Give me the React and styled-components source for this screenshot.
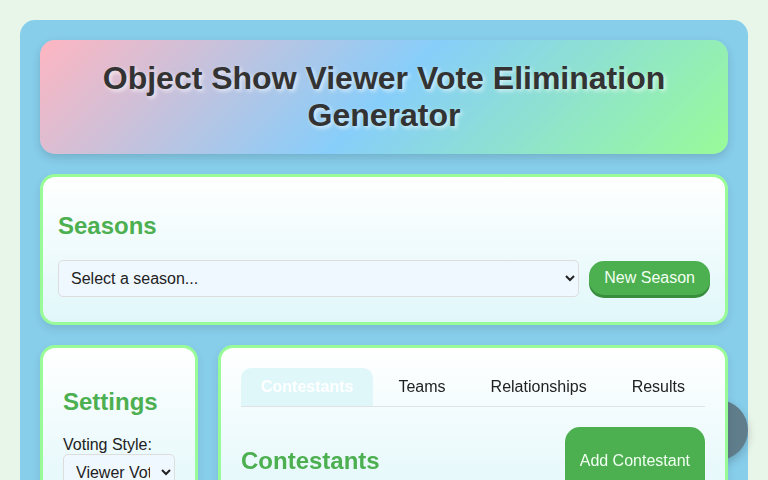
import { useState } from "react";
import styled, { createGlobalStyle } from "styled-components";

const GlobalStyle = createGlobalStyle`
  body {
    margin: 0;
    background: #e8f5e9;
    font-family: "Liberation Sans", Arial, sans-serif;
    color: #333;
  }
`;

const Container = styled.div`
  margin: 20px;
  padding: 20px;
  background: #87ceeb;
  border-radius: 15px;
`;

const Header = styled.header`
  padding: 20px;
  border-radius: 15px;
  background: linear-gradient(135deg, #ffb6c1, #87cefa, #98fb98);
  box-shadow: 0 4px 10px rgba(0, 0, 0, 0.15);
  text-align: center;
  h1 {
    margin: 0;
    font-size: 32px;
    color: #333;
    text-shadow: 2px 2px 4px rgba(255, 255, 255, 0.7);
  }
`;

const Card = styled.section`
  position: relative;
  margin-top: 20px;
  padding: ${(props) => (props.$tight ? "15px" : "20px")};
  border: 3px solid #98fb98;
  border-radius: 15px;
  background: linear-gradient(to bottom, #ffffff, #e0f7fa);
  box-shadow: 0 4px 8px rgba(0, 0, 0, 0.1);
  min-width: 0;
  h2 {
    color: #4caf50;
    font-size: 24px;
    margin: 20px 0;
  }
`;

const Row = styled.div`
  display: flex;
  align-items: center;
  gap: 10px;
  margin-bottom: 10px;
`;

const Select = styled.select`
  flex: 1;
  width: 100%;
  min-width: 0;
  padding: 8px;
  font-family: inherit;
  font-size: 16px;
  color: #222;
  background: #f0f8ff;
  border: 1px solid #ddd;
  border-radius: 5px;
`;

const Button = styled.button`
  padding: 8px 15px;
  margin-top: -2px;
  font-family: inherit;
  font-size: 16px;
  color: #f1fff1;
  background: #4caf50;
  border: none;
  border-radius: 15px;
  box-shadow: 0 3px 0 #388e3c;
  cursor: pointer;
  white-space: nowrap;
`;

const AddButton = styled(Button)`
  margin-top: 0;
  padding: 0 15px;
  box-shadow: none;
`;

const Columns = styled.div`
  display: grid;
  grid-template-columns: 158px 1fr;
  gap: 20px;
`;

const Label = styled.label`
  display: block;
  font-size: 16px;
  color: #222;
`;

const Tabs = styled.div`
  display: flex;
  justify-content: space-between;
  border-bottom: 1px solid #dde3e6;
  margin-bottom: 20px;
`;

const Tab = styled.button`
  padding: 10px 20px;
  font-family: inherit;
  font-size: 16px;
  font-weight: ${(props) => (props.$active ? "bold" : "normal")};
  color: ${(props) => (props.$active ? "#fff" : "#222")};
  background: ${(props) => (props.$active ? "#e0f7fa" : "transparent")};
  border: none;
  border-radius: 10px 10px 0 0;
  cursor: pointer;
`;

const SectionHead = styled.div`
  display: flex;
  justify-content: space-between;
`;

const HelpButton = styled.button`
  position: fixed;
  right: 20px;
  bottom: 20px;
  width: 60px;
  height: 60px;
  border: none;
  border-radius: 50%;
  background: #607d8b;
  color: #fff;
  font-size: 24px;
  font-weight: bold;
  box-shadow: 0 4px 10px rgba(0, 0, 0, 0.2);
`;

const tabs = ["Contestants", "Teams", "Relationships", "Results"];

export default function App() {
  const [tab, setTab] = useState("Contestants");

  return (
    <>
      <GlobalStyle />
      <Container>
        <HelpButton>?</HelpButton>
        <Header>
          <h1>Object Show Viewer Vote Elimination Generator</h1>
        </Header>

        <Card $tight>
          <h2>Seasons</h2>
          <Row>
            <Select defaultValue="">
              <option value="">Select a season...</option>
            </Select>
            <Button>New Season</Button>
          </Row>
        </Card>

        <Columns>
          <Card>
            <h2>Settings</h2>
            <Label>Voting Style:</Label>
            <Select defaultValue="viewer">
              <option value="viewer">Viewer Vote</option>
              <option value="random">Random</option>
            </Select>
          </Card>

          <Card>
            <Tabs>
              {tabs.map((t) => (
                <Tab key={t} $active={t === tab} onClick={() => setTab(t)}>
                  {t}
                </Tab>
              ))}
            </Tabs>
            <SectionHead>
              <h2>Contestants</h2>
              <AddButton>Add Contestant</AddButton>
            </SectionHead>
          </Card>
        </Columns>
      </Container>
    </>
  );
}
